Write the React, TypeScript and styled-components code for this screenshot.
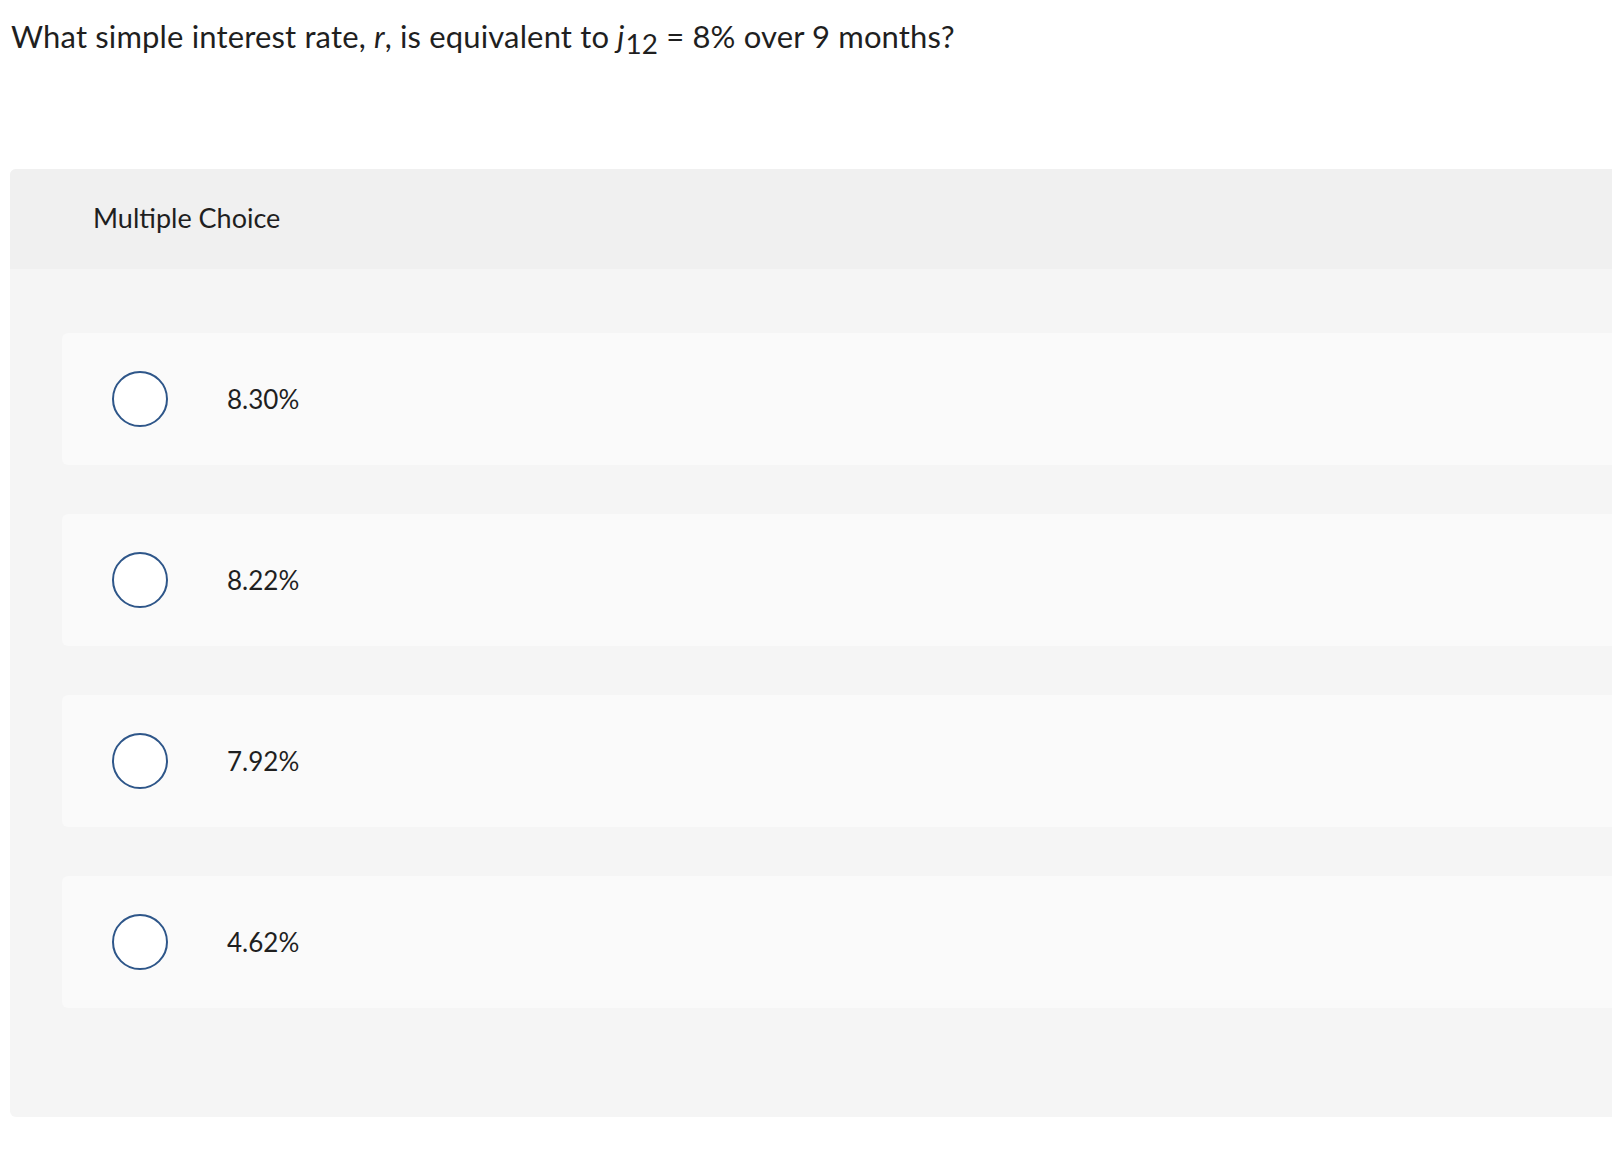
import React from "react";
import styled, { createGlobalStyle } from "styled-components";

const Global = createGlobalStyle`
  html, body {
    margin: 0;
    padding: 0;
    background: #ffffff;
    overflow: hidden;
  }
  body {
    font-family: "Lato", "Open Sans", sans-serif;
    color: #1f1f1f;
  }
`;

const Page = styled.div`
  padding: 14px 0 0 10px;
  width: 1760px;
`;

const Question = styled.p`
  margin: 0 0 110px 1px;
  font-size: 31px;
  line-height: 44px;
  letter-spacing: 0.15px;
  color: #1f1f1f;
`;

const Var = styled.i`
  font-style: italic;
`;

const Sub = styled.span`
  font-size: 0.9em;
  position: relative;
  top: 6px;
  margin-left: 1px;
`;

const Panel = styled.section`
  background: #f5f5f5;
  border-radius: 6px;
  overflow: hidden;
`;

const PanelHeader = styled.header`
  height: 100px;
  background: #f0f0f0;
  display: flex;
  align-items: center;
  padding-left: 83px;
  padding-bottom: 3px;
  box-sizing: border-box;
  font-size: 27px;
  color: #1f1f1f;
`;

const Choices = styled.div`
  display: flex;
  flex-direction: column;
  gap: 49px;
  padding: 64px 0 109px 52px;
`;

const Choice = styled.label`
  height: 132px;
  background: #fafafa;
  border-radius: 6px;
  display: flex;
  align-items: center;
  padding-left: 50px;
  cursor: pointer;
`;

const Radio = styled.span`
  box-sizing: border-box;
  width: 56px;
  height: 56px;
  border-radius: 50%;
  border: 2px solid #2e5689;
  background: #ffffff;
  flex: none;
`;

const ChoiceText = styled.span`
  margin-left: 59px;
  font-size: 26px;
  color: #1f1f1f;
`;

const options = ["8.30%", "8.22%", "7.92%", "4.62%"];

export default function App() {
  return (
    <>
      <Global />
      <Page>
        <Question>
          What simple interest rate, <Var>r</Var>, is equivalent to <Var>j</Var>
          <Sub>12</Sub> = 8% over 9 months?
        </Question>
        <Panel>
          <PanelHeader>Multiple Choice</PanelHeader>
          <Choices>
            {options.map((o) => (
              <Choice key={o}>
                <Radio />
                <ChoiceText>{o}</ChoiceText>
              </Choice>
            ))}
          </Choices>
        </Panel>
      </Page>
    </>
  );
}
